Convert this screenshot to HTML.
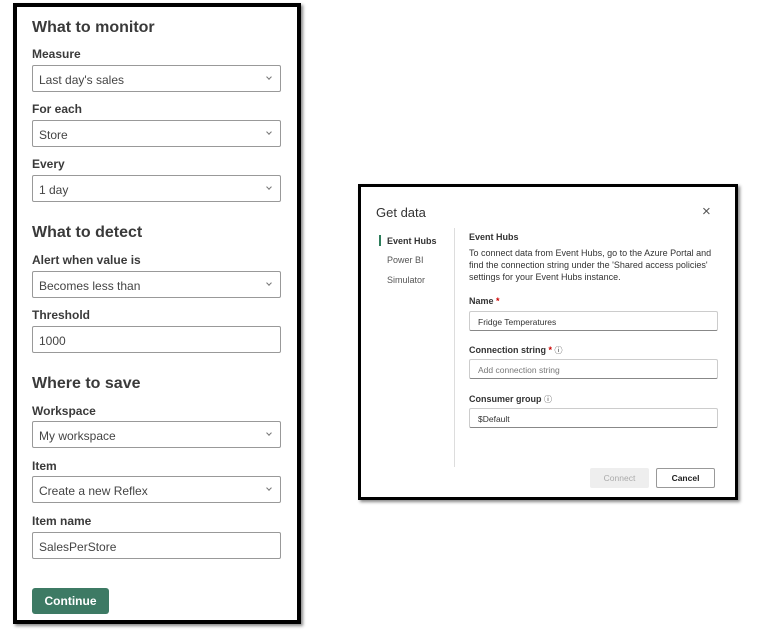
<!DOCTYPE html>
<html><head><style>
*{box-sizing:border-box;margin:0;padding:0}
body{width:768px;height:638px;background:#fff;position:relative;font-family:"Liberation Sans",sans-serif;color:#252423;overflow:hidden}
.a{position:absolute}
#L{left:13px;top:3px;width:288px;height:621px;border:4px solid #000;box-shadow:2px 2px 3px #888}
.h{position:absolute;left:32px;font-size:16px;font-weight:bold;color:#3a3a3a}
.lb{position:absolute;left:32px;font-size:12px;font-weight:bold;color:#3a3a3a}
.in{position:absolute;left:32px;width:249px;height:27px;border:1px solid #999;border-radius:2px;font-size:12px;padding:7px 6px;color:#444}
.ch{position:absolute;right:9px;top:9px;width:4px;height:4px;border-right:1px solid #777;border-bottom:1px solid #777;transform:rotate(45deg)}
#R{left:358px;top:184px;width:380px;height:316px;border:3px solid #000;box-shadow:2px 2px 3px #888}
.s{font-size:9px;color:#333}
.ri{position:absolute;left:469px;width:249px;height:20px;border:1px solid #ccc;border-bottom:1px solid #888;border-radius:2px;font-size:8.5px;padding:5px 8px;color:#333}
</style></head><body>
<div class="a" id="L"></div>
<div class="h" style="top:19px">What to monitor</div>
<div class="lb" style="top:47px">Measure</div>
<div class="in" style="top:65px">Last day's sales<div class="ch"></div></div>
<div class="lb" style="top:102px">For each</div>
<div class="in" style="top:120px">Store<div class="ch"></div></div>
<div class="lb" style="top:157px">Every</div>
<div class="in" style="top:175px">1 day<div class="ch"></div></div>
<div class="h" style="top:224px">What to detect</div>
<div class="lb" style="top:253px">Alert when value is</div>
<div class="in" style="top:271px">Becomes less than<div class="ch"></div></div>
<div class="lb" style="top:308px">Threshold</div>
<div class="in" style="top:326px">1000</div>
<div class="h" style="top:375px">Where to save</div>
<div class="lb" style="top:404px">Workspace</div>
<div class="in" style="top:421px">My workspace<div class="ch"></div></div>
<div class="lb" style="top:459px">Item</div>
<div class="in" style="top:476px">Create a new Reflex<div class="ch"></div></div>
<div class="lb" style="top:514px">Item name</div>
<div class="in" style="top:532px">SalesPerStore</div>
<div class="a" style="left:32px;top:588px;width:77px;height:26px;background:#3d7a64;border-radius:3px;color:#fff;font-size:12px;font-weight:bold;text-align:center;line-height:26px">Continue</div>

<div class="a" id="R"></div>
<div class="a" style="left:376px;top:205px;font-size:13px;color:#333">Get data</div>
<div class="a" style="left:702px;top:203px;font-size:15px;color:#555">×</div>
<div class="a" style="left:379px;top:235px;width:2px;height:11px;background:#2e7d5b"></div>
<div class="a s" style="left:387px;top:236px;font-weight:bold">Event Hubs</div>
<div class="a s" style="left:387px;top:255px;color:#555">Power BI</div>
<div class="a s" style="left:387px;top:275px;color:#555">Simulator</div>
<div class="a" style="left:454px;top:228px;width:1px;height:239px;background:#ddd"></div>
<div class="a s" style="left:469px;top:232px;font-weight:bold">Event Hubs</div>
<div class="a s" style="left:469px;top:247px;line-height:12px;width:250px">To connect data from Event Hubs, go to the Azure Portal and find the connection string under the 'Shared access policies' settings for your Event Hubs instance.</div>
<div class="a s" style="left:469px;top:296px;font-weight:bold">Name <span style="color:#c00">*</span></div>
<div class="ri" style="top:311px">Fridge Temperatures</div>
<div class="a s" style="left:469px;top:345px;font-weight:bold">Connection string <span style="color:#c00">*</span> <span style="font-weight:normal;font-size:8px">ⓘ</span></div>
<div class="ri" style="top:359px;color:#777">Add connection string</div>
<div class="a s" style="left:469px;top:394px;font-weight:bold">Consumer group <span style="font-weight:normal;font-size:8px">ⓘ</span></div>
<div class="ri" style="top:408px">$Default</div>
<div class="a" style="left:590px;top:468px;width:59px;height:20px;background:#eee;border-radius:2px;font-size:8.5px;color:#aaa;text-align:center;line-height:20px">Connect</div>
<div class="a" style="left:656px;top:468px;width:59px;height:20px;border:1px solid #999;border-radius:2px;font-size:8.5px;color:#222;text-align:center;line-height:18px;font-weight:bold">Cancel</div>
</body></html>
